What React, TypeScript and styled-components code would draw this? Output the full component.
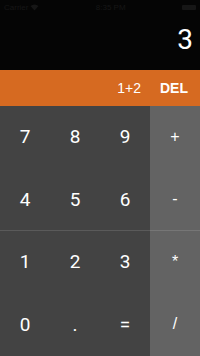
import styled, { createGlobalStyle } from 'styled-components';

const GlobalStyle = createGlobalStyle`
  html, body {
    margin: 0;
    padding: 0;
    background: #000;
  }
  body {
    font-family: 'Liberation Sans', Arial, sans-serif;
  }
`;

const digitRows = [
  ['7', '8', '9'],
  ['4', '5', '6'],
  ['1', '2', '3'],
  ['0', '.', '='],
];

const operators = ['+', '-', '*', '/'];

export default function App() {
  return (
    <>
      <GlobalStyle />
      <Screen>
        <Display>
          <StatusBar>
            <StatusLeft>
              Carrier
              <svg width="9" height="7" viewBox="0 0 9 7">
                <path d="M0.5 2 A6 6 0 0 1 8.5 2 L4.5 6.5 Z" fill="#161616" />
              </svg>
            </StatusLeft>
            <span>8:35 PM</span>
            <Battery />
          </StatusBar>
          <Result>3</Result>
        </Display>
        <ExpressionBar>
          <Expression>1+2</Expression>
          <DelButton>DEL</DelButton>
        </ExpressionBar>
        <Keypad>
          <Digits>
            {digitRows.map((row, i) => (
              <DigitRow key={i} $divider={i === 1}>
                {row.map((d) => (
                  <Key key={d}>{d}</Key>
                ))}
              </DigitRow>
            ))}
          </Digits>
          <Operators>
            {operators.map((op, i) => (
              <OpKey key={op} $divider={i === 1}>
                {op}
              </OpKey>
            ))}
          </Operators>
        </Keypad>
      </Screen>
    </>
  );
}

const Screen = styled.div`
  width: 200px;
  height: 356px;
  display: flex;
  flex-direction: column;
  overflow: hidden;
`;

const Display = styled.div`
  height: 70px;
  background: #050505;
  display: flex;
  flex-direction: column;
`;

const StatusBar = styled.div`
  height: 14px;
  padding: 0 4px;
  display: flex;
  align-items: center;
  justify-content: space-between;
  font-size: 8px;
  color: #161616;
`;

const StatusLeft = styled.span`
  display: flex;
  align-items: center;
  gap: 2px;
`;

const Battery = styled.span`
  width: 14px;
  height: 5px;
  background: #161616;
  border-radius: 1px;
`;

const Result = styled.div`
  flex: 1;
  display: flex;
  align-items: center;
  justify-content: flex-end;
  padding: 0 7px 6px 0;
  color: #fff;
  font-size: 28px;
  font-family: Roboto, 'Liberation Sans', sans-serif;
`;

const ExpressionBar = styled.div`
  height: 36px;
  background: #d66a21;
  display: flex;
  align-items: center;
  justify-content: flex-end;
  padding-right: 12px;
  gap: 19px;
  color: #fff;
`;

const Expression = styled.span`
  font-size: 14px;
`;

const DelButton = styled.span`
  font-size: 14px;
  font-weight: bold;
`;

const Keypad = styled.div`
  flex: 1;
  display: flex;
`;

const Digits = styled.div`
  width: 150px;
  background: #434343;
  display: flex;
  flex-direction: column;
`;

const DigitRow = styled.div<{ $divider: boolean }>`
  flex: 1;
  display: flex;
  border-bottom: 1px solid ${(p) => (p.$divider ? '#5a5a5a' : 'transparent')};
`;

const Key = styled.div`
  flex: 1;
  display: flex;
  align-items: center;
  justify-content: center;
  color: #fff;
  font-size: 19px;
  font-family: Roboto, 'Liberation Sans', sans-serif;
`;

const Operators = styled.div`
  flex: 1;
  background: #636363;
  display: flex;
  flex-direction: column;
`;

const OpKey = styled.div<{ $divider: boolean }>`
  flex: 1;
  display: flex;
  align-items: center;
  justify-content: center;
  color: #fff;
  font-size: 16px;
  font-family: 'Liberation Sans', Arial, sans-serif;
  border-bottom: 1px solid ${(p) => (p.$divider ? '#767676' : 'transparent')};
`;
